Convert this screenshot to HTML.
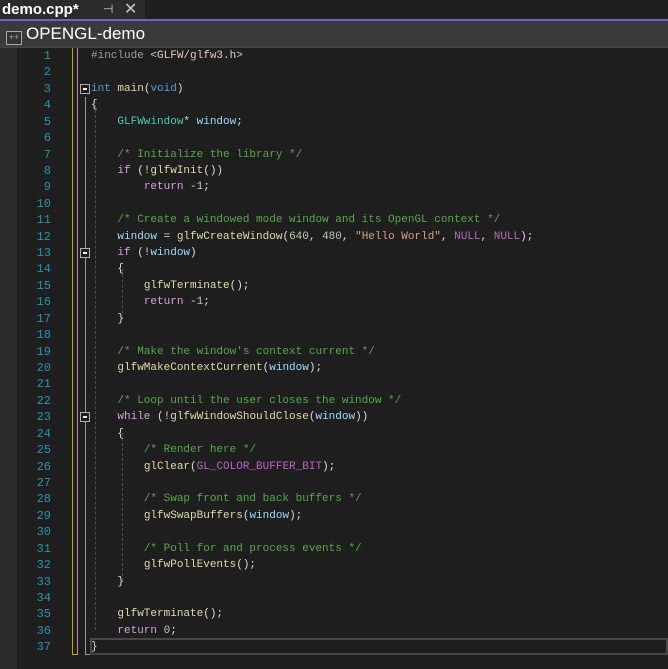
<!DOCTYPE html>
<html><head><meta charset="utf-8"><style>
body{margin:0;width:668px;height:669px;background:#1e1e1e;overflow:hidden;position:relative;font-family:"Liberation Sans",sans-serif}
.tab{position:absolute;left:0;top:0;width:145px;height:19px;background:#2b2b2b;color:#fff;font-weight:bold;font-size:15px;line-height:19px}
.purple{position:absolute;left:0;top:19px;width:668px;height:2px;background:#6b5fd6}
.nav{position:absolute;left:0;top:21px;width:668px;height:25px;background:#3a3a3a;border-bottom:2px solid #444;color:#fff;font-size:17px;line-height:25px}
.gut{position:absolute;left:0;top:48px;width:17px;height:621px;background:#2a2a2a}
.ln{position:absolute;left:18px;top:48px;width:33px;text-align:right;color:#2b91af;font:12px/16.42px "Liberation Mono",monospace;white-space:pre}
.code{position:absolute;left:91px;top:48px;font:11px/16.42px "Liberation Mono",monospace;white-space:pre;color:#dcdcdc}
.k{color:#569cd6}.c{color:#d8a0df}.f{color:#dcdcaa}.v{color:#9cdcfe}.m{color:#57a64a}.s{color:#d69d85}.n{color:#b5cea8}.t{color:#4ec9b0}.p{color:#9b9b9b}.i{color:#e8c9bb}.mac{color:#bd63c5}
.fold{position:absolute;left:80px;width:10px;height:10px;border:1px solid #b0b0b0;box-sizing:border-box;background:#1e1e1e}
.fold:after{content:"";position:absolute;left:2px;top:3px;width:4px;height:2px;background:#eee}
</style></head><body>
<div class="tab"><span style="margin-left:2px">demo.cpp*</span><span style="position:absolute;left:103px;font-weight:normal;font-size:12px;color:#ccc">⊣</span><span style="position:absolute;left:124px;font-weight:normal;font-size:16px;color:#ccc">✕</span></div>
<div class="purple"></div>
<div class="nav"><span style="display:inline-block;width:14px;height:12px;border:1px solid #aaa;margin:0 4px 0 6px;vertical-align:-1px;background:#333;color:#c586c0;font-size:9px;line-height:10px;text-align:center">++</span>OPENGL-demo</div>
<div class="gut"></div>
<div style="position:absolute;left:72px;top:48px;width:6px;height:607px;border:1px solid #b8a033;box-sizing:border-box;border-width:0 1px 1px 1px;background:#1e1e1e"></div>
<div style="position:absolute;left:85px;top:97px;width:1px;height:557px;background:#999"></div>
<div style="position:absolute;left:85px;top:654px;width:5px;height:1px;background:#999"></div>
<div class="fold" style="top:84px"></div>
<div class="fold" style="top:248px"></div>
<div class="fold" style="top:412px"></div>
<div style="position:absolute;left:90px;top:638px;width:578px;height:17px;border:2px solid #464646;box-sizing:border-box"></div>
<div style="position:absolute;left:95px;top:105px;width:0;height:525px;border-left:1px dashed #4a4a4a"></div>
<div style="position:absolute;left:122px;top:269px;width:0;height:50px;border-left:1px dashed #4a4a4a"></div>
<div style="position:absolute;left:122px;top:433px;width:0;height:148px;border-left:1px dashed #4a4a4a"></div>
<div class="ln">1
2
3
4
5
6
7
8
9
10
11
12
13
14
15
16
17
18
19
20
21
22
23
24
25
26
27
28
29
30
31
32
33
34
35
36
37</div>
<div class="code"><span class="p">#include</span> <span class="i">&lt;GLFW/glfw3.h&gt;</span>

<span class="k">int</span> <span class="f">main</span>(<span class="k">void</span>)
{
    <span class="t">GLFWwindow</span>* <span class="v">window</span>;

    <span class="m">/* Initialize the library */</span>
    <span class="c">if</span> (!<span class="f">glfwInit</span>())
        <span class="c">return</span> -<span class="n">1</span>;

    <span class="m">/* Create a windowed mode window and its OpenGL context */</span>
    <span class="v">window</span> = <span class="f">glfwCreateWindow</span>(<span class="n">640</span>, <span class="n">480</span>, <span class="s">"Hello World"</span>, <span class="mac">NULL</span>, <span class="mac">NULL</span>);
    <span class="c">if</span> (!<span class="v">window</span>)
    {
        <span class="f">glfwTerminate</span>();
        <span class="c">return</span> -<span class="n">1</span>;
    }

    <span class="m">/* Make the window's context current */</span>
    <span class="f">glfwMakeContextCurrent</span>(<span class="v">window</span>);

    <span class="m">/* Loop until the user closes the window */</span>
    <span class="c">while</span> (!<span class="f">glfwWindowShouldClose</span>(<span class="v">window</span>))
    {
        <span class="m">/* Render here */</span>
        <span class="f">glClear</span>(<span class="mac">GL_COLOR_BUFFER_BIT</span>);

        <span class="m">/* Swap front and back buffers */</span>
        <span class="f">glfwSwapBuffers</span>(<span class="v">window</span>);

        <span class="m">/* Poll for and process events */</span>
        <span class="f">glfwPollEvents</span>();
    }

    <span class="f">glfwTerminate</span>();
    <span class="c">return</span> <span class="n">0</span>;
}</div>
</body></html>
